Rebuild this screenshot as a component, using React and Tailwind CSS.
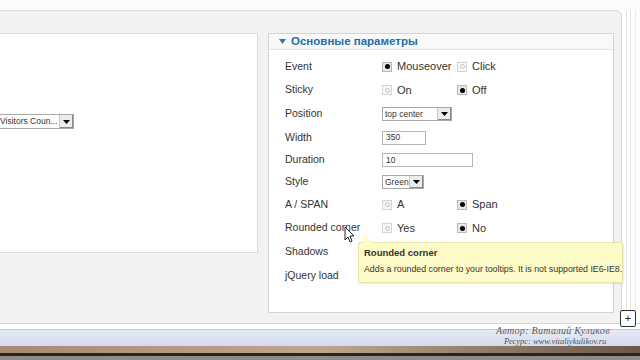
import React from 'react';

const Radio = ({ on }) => (
    <span
        className={`flex h-[10px] w-[10px] items-center justify-center border ${on ? 'border-[#b8b8b8] bg-[#e8e8e8]' : 'border-[#d4d4d4] bg-[#f8f8f8]'}`}
    >
        {on ? (
            <span className="h-[5px] w-[5px] rounded-full bg-black" />
        ) : (
            <span className="h-[5px] w-[5px] rounded-full border border-[#c4c4c4]" />
        )}
    </span>
);

const Option = ({ on, label, wide }) => (
    <span className={`flex items-center gap-[5px] pl-[2px] ${wide ? 'w-[75px]' : ''}`}>
        <Radio on={on} />
        {label && <span className="text-[11px] text-[#333]">{label}</span>}
    </span>
);

const Arrow = () => (
    <span className="flex h-full w-[14px] shrink-0 items-center justify-center border-l border-[#c6c6c6] bg-[#ececec] shadow-[inset_-1px_-1px_0_#888]">
        <svg width="7" height="4" viewBox="0 0 7 4">
            <path d="M0 0h7L3.5 4z" fill="#000" />
        </svg>
    </span>
);

const Select = ({ value, width }) => (
    <span className={`flex h-[14px] items-center justify-between border border-[#a9a9a9] bg-white pl-[2px] ${width}`}>
        <span className="whitespace-nowrap text-[8.5px] leading-none text-[#333]">{value}</span>
        <Arrow />
    </span>
);

const Input = ({ value, width }) => (
    <span className={`flex h-[14px] items-center border border-[#b5b5b5] bg-white pl-[3px] text-[8.5px] text-[#333] ${width}`}>
        {value}
    </span>
);

const rows = [
    { label: 'Event', h: 'h-[23px]', c: <><Option on label="Mouseover" wide /><Option label="Click" /></> },
    { label: 'Sticky', h: 'h-[24px]', c: <><Option label="On" wide /><Option on label="Off" /></> },
    { label: 'Position', h: 'h-[24px]', c: <Select value="top center" width="w-[70px] ml-[2px]" /> },
    { label: 'Width', h: 'h-[23px]', c: <Input value="350" width="w-[44px] ml-[2px]" /> },
    { label: 'Duration', h: 'h-[22px]', c: <Input value="10" width="w-[91px] ml-[2px]" /> },
    { label: 'Style', h: 'h-[22px]', c: <Select value="Green" width="w-[42px] ml-[2px]" /> },
    { label: 'A / SPAN', h: 'h-[23px]', c: <><Option label="A" wide /><Option on label="Span" /></> },
    { label: 'Rounded corner', h: 'h-[24px]', c: <><Option label="Yes" wide /><Option on label="No" /></> },
    // options of this row sit fully under the tooltip
    { label: 'Shadows', h: 'h-[24px]', c: <><Option wide /><Option on /></> },
    { label: 'jQuery load', h: 'h-[24px]', c: <><Option label="Yes" wide /><Option on label="No" /></> },
];

const App = () => {
    return (
        <div className="relative flex h-[360px] w-[640px] flex-col overflow-hidden bg-white font-['Liberation_Sans',Arial,sans-serif]">
            <div className="h-[10px] bg-[#fbfbfb]" />

            <div className="flex h-[313px]">
                <div className="flex w-[622px] gap-[10px] rounded-tr-[6px] border-t border-r border-[#d9d9d9] bg-[#f2f2f2] pt-[22px]">
                    <div className="h-[220px] w-[258px] border-t border-r border-b border-[#dcdcdc] bg-white pt-[80px]">
                        <div className="flex h-[15px] w-[74px] items-center justify-between border border-l-0 border-[#a9a9a9] bg-white">
                            <span className="whitespace-nowrap text-[8.5px] leading-none text-[#333]">Visitors Coun...</span>
                            <Arrow />
                        </div>
                    </div>

                    <div className="flex h-[280px] w-[346px] flex-col border border-[#d4d4d4] bg-white">
                        <div className="flex h-[16px] items-center gap-[5px] border-b border-[#e2e2e2] bg-[#f9f9f9] pl-[10px]">
                            <svg width="7" height="5" viewBox="0 0 7 5">
                                <path d="M0 0h7L3.5 5z" fill="#2d7ab5" />
                            </svg>
                            <span className="text-[11.5px] font-bold text-[#1f6ea8]">Основные параметры</span>
                        </div>
                        <div className="flex flex-col pt-[5px] pl-[16px]">
                            {rows.map((r) => (
                                <div key={r.label} className={`flex items-center ${r.h}`}>
                                    <span className="w-[95px] text-[10.5px] text-[#333]">{r.label}</span>
                                    <div className="flex items-center">{r.c}</div>
                                </div>
                            ))}
                        </div>
                    </div>
                </div>
                <div className="flex flex-1 bg-white">
                    <div className="w-[4px]" />
                    <div className="w-[5px] border-l border-r border-[#e4e4e4]" />
                    <div className="w-[5px] border-r border-[#ececec]" />
                </div>
            </div>

            <div className="h-[6px] border-t border-[#d6d6d6] bg-white" />
            <div className="h-[17px] border-t border-[#c8c8c8] bg-gradient-to-b from-[#e6eaf6] to-[#d4dbef]" />
            <div className="h-[7px] bg-gradient-to-r from-[#a88a72] via-[#c0a68c] to-[#6a5848]" />
            <div className="h-[3px] bg-[#2a2420]" />
            <div className="flex-1 bg-[#8c8c8c]" />

            {/* tooltip */}
            <div className="absolute left-[358px] top-[242px] h-[41px] w-[265px] rounded-[2px] border border-[#e8e4a8] bg-[#fdfbc8] px-[5px] pt-[3px] shadow-[1px_1px_2px_rgba(0,0,0,0.1)]">
                <div className="absolute -top-[10px] left-[4px] h-0 w-0 border-r-[10px] border-b-[10px] border-r-transparent border-b-[#fdfbc8]" />
                <div className="text-[9.5px] font-bold text-[#333]">Rounded corner</div>
                <div className="mt-[3px] whitespace-nowrap text-[8.8px] text-[#333]">
                    Adds a rounded corner to your tooltips. It is not supported IE6-IE8.
                </div>
            </div>

            {/* cursor */}
            <svg className="absolute left-[344px] top-[226px]" width="11" height="17" viewBox="0 0 11 17">
                <path d="M1 1v13l3-3 2 5 2-1-2-5h4z" fill="#fff" stroke="#222" strokeWidth="1" />
            </svg>

            {/* plus button */}
            <div className="absolute left-[620px] top-[310px] flex h-[17px] w-[16px] items-center justify-center rounded-[2px] border border-[#333] bg-white text-[11px] leading-none text-[#222]">
                +
            </div>

            {/* watermark */}
            <div className="absolute left-[496px] top-[325px] text-[10px] italic leading-[11px] text-[#555] font-['Liberation_Serif',serif] [text-shadow:0_0_1px_#fff]">
                <div className="tracking-[0.3px]">Автор: Виталий Куликов</div>
                <div className="ml-[8px] text-[8.5px] text-[#444]">Ресурс: www.vitaliykulikov.ru</div>
            </div>
        </div>
    );
};

export default App;
